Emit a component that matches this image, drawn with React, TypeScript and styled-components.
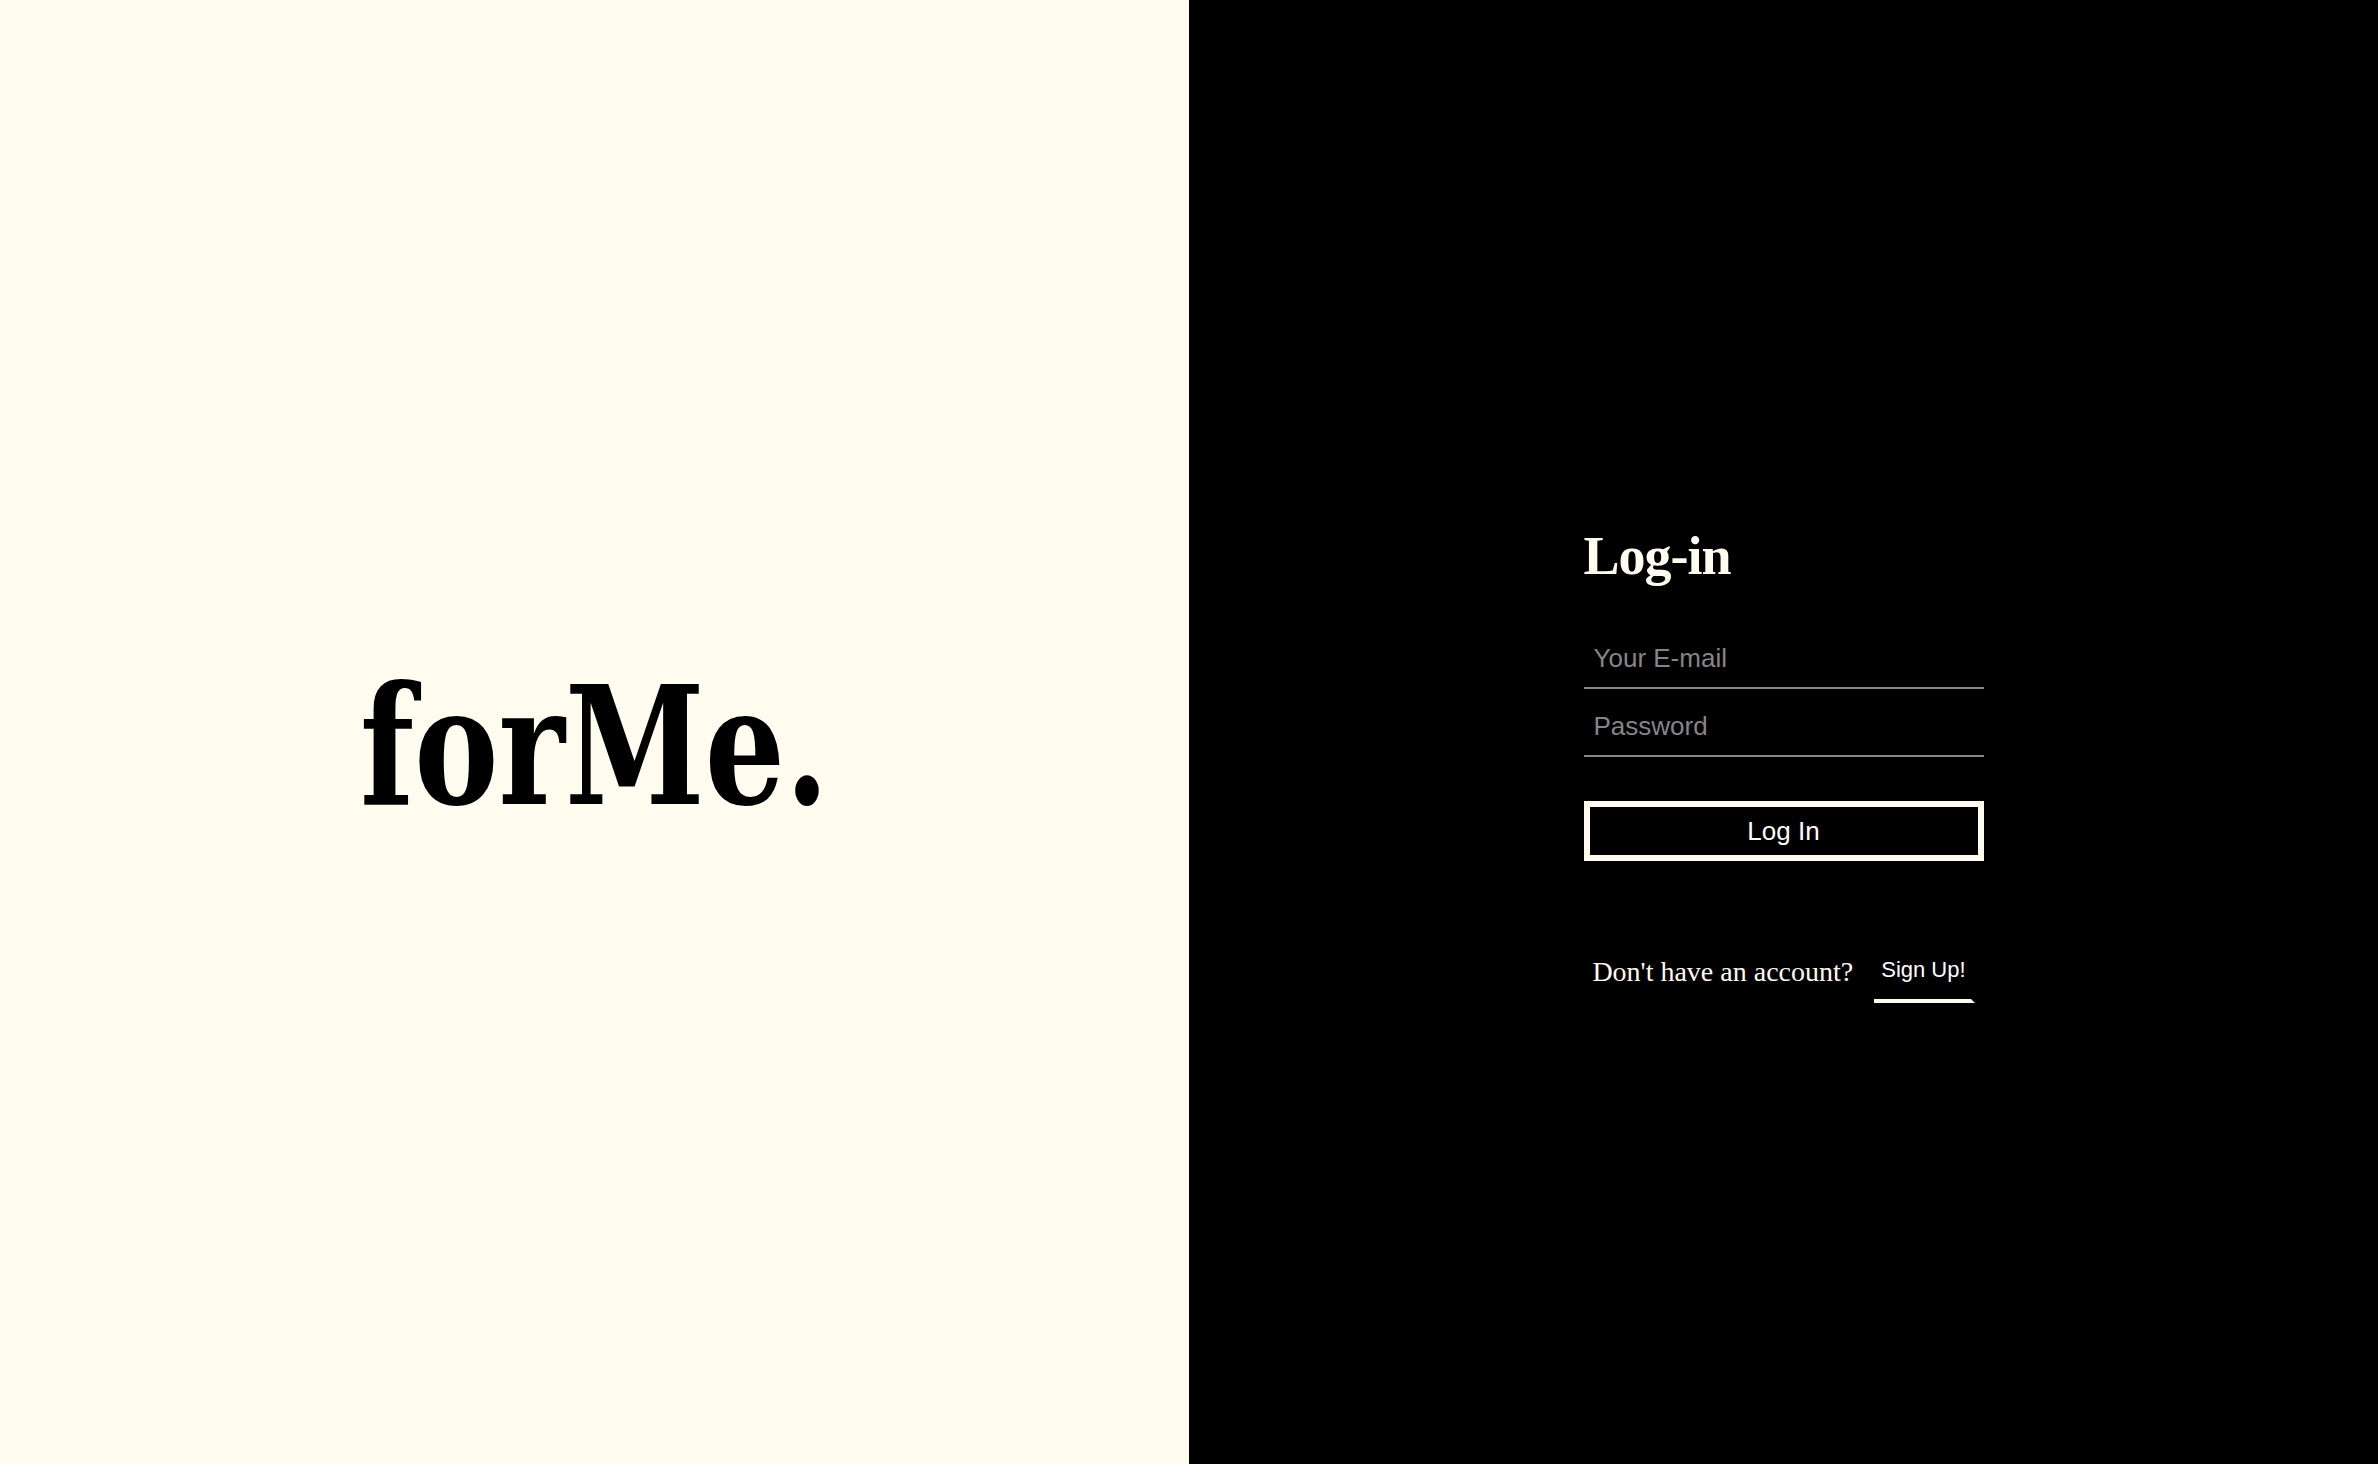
import React from "react";
import styled, { createGlobalStyle } from "styled-components";

const CREAM = "#fffbee";

const GlobalStyle = createGlobalStyle`
  html, body {
    margin: 0;
    padding: 0;
    height: 100%;
  }
  #root {
    height: 100%;
  }
  * {
    box-sizing: border-box;
  }
`;

const Page = styled.main`
  display: grid;
  grid-template-columns: 1fr 1fr;
  height: 100vh;
  width: 100%;
`;

const Panel = styled.section<{ $dark?: boolean }>`
  display: flex;
  align-items: center;
  justify-content: center;
  padding-top: 68px;
  background: ${(p) => (p.$dark ? "#000000" : CREAM)};
`;

const Logo = styled.h1`
  margin: 0 0 40px 0;
  font-family: "DejaVu Serif", "Liberation Serif", serif;
  font-weight: bold;
  font-size: 165px;
  line-height: 1;
  color: #000;
  transform: scaleX(0.765);
  transform-origin: center;
  white-space: nowrap;
`;

const Form = styled.form`
  width: 400px;
  display: flex;
  flex-direction: column;
`;

const Title = styled.h2`
  margin: 0 0 46px 0;
  font-family: "Liberation Serif", serif;
  font-weight: bold;
  font-size: 54px;
  line-height: 54px;
  letter-spacing: -1px;
  color: ${CREAM};
`;

const Field = styled.input`
  display: block;
  width: 100%;
  height: 60px;
  margin: 0 0 8px 0;
  padding: 0 10px;
  border: none;
  border-bottom: 2px solid #858585;
  background: transparent;
  outline: none;
  font-family: "Liberation Sans", Arial, sans-serif;
  font-size: 26px;
  color: ${CREAM};
  &::placeholder {
    color: #858585;
  }
`;

const SubmitButton = styled.button`
  margin-top: 36px;
  height: 60px;
  width: 100%;
  border: 6px solid ${CREAM};
  background: #000;
  color: #ffffff;
  font-family: "Liberation Sans", Arial, sans-serif;
  font-size: 26px;
  cursor: pointer;
`;

const SignUpRow = styled.div`
  margin-top: 80px;
  display: flex;
  align-items: center;
  justify-content: center;
  gap: 21px;
`;

const Prompt = styled.span`
  font-family: "Liberation Serif", serif;
  font-size: 28px;
  color: ${CREAM};
`;

const SignUpButton = styled.button`
  padding: 16px 5px 16px 7px;
  background: transparent;
  border: none;
  border-bottom: 4px solid ${CREAM};
  border-right: 4px solid #000;
  color: #ffffff;
  font-family: "Liberation Sans", Arial, sans-serif;
  font-size: 22px;
  cursor: pointer;
`;

export default function App() {
  return (
    <>
      <GlobalStyle />
      <Page>
        <Panel>
          <Logo>forMe.</Logo>
        </Panel>
        <Panel $dark>
          <Form onSubmit={(e) => e.preventDefault()}>
            <Title>Log-in</Title>
            <Field type="email" placeholder="Your E-mail" />
            <Field type="password" placeholder="Password" />
            <SubmitButton type="submit">Log In</SubmitButton>
            <SignUpRow>
              <Prompt>Don't have an account?</Prompt>
              <SignUpButton type="button">Sign Up!</SignUpButton>
            </SignUpRow>
          </Form>
        </Panel>
      </Page>
    </>
  );
}
